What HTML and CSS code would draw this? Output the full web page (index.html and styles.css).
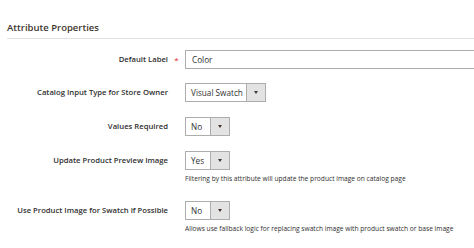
FILE: index.html
```html
<!DOCTYPE html>
<html>
<head>
<meta charset="utf-8">
<link rel="stylesheet" href="styles.css">
</head>
<body>
<div class="page">
  <div class="title">Attribute Properties</div>
  <div class="divider"></div>

  <div class="row r1">
    <div class="label">Default Label</div>
    <div class="req">*</div>
    <div class="control"><div class="input">Color</div></div>
  </div>

  <div class="row r2">
    <div class="label">Catalog Input Type for Store Owner</div>
    <div class="req"></div>
    <div class="control"><div class="select wide"><span class="val">Visual Swatch</span><span class="arrow"><i></i></span></div></div>
  </div>

  <div class="row r3">
    <div class="label">Values Required</div>
    <div class="req"></div>
    <div class="control"><div class="select"><span class="val">No</span><span class="arrow"><i></i></span></div></div>
  </div>

  <div class="row r4">
    <div class="label">Update Product Preview Image</div>
    <div class="req"></div>
    <div class="control">
      <div class="select"><span class="val">Yes</span><span class="arrow"><i></i></span></div>
      <div class="note">Filtering by this attribute will update the product image on catalog page</div>
    </div>
  </div>

  <div class="row r5">
    <div class="label">Use Product Image for Swatch if Possible</div>
    <div class="req"></div>
    <div class="control">
      <div class="select"><span class="val">No</span><span class="arrow"><i></i></span></div>
      <div class="note">Allows use fallback logic for replacing swatch image with product swatch or base image</div>
    </div>
  </div>
</div>
</body>
</html>
```

FILE: styles.css
```css
html, body {
  margin: 0;
  padding: 0;
  background: #ffffff;
}
body {
  font-family: "Open Sans", "Liberation Sans", sans-serif;
  color: #303030;
  width: 474px;
  height: 248px;
  overflow: hidden;
}
.page {
  padding: 19px 0 0 7px;
}
.title {
  font-size: 9.5px;
  font-weight: 600;
  color: #41362f;
  line-height: 18px;
}
.divider {
  height: 1px;
  background: #e3e3e3;
  margin-top: 1px;
}
.row {
  display: flex;
  align-items: flex-start;
}
.r1 { margin-top: 11px; }
.r2 { margin-top: 14px; }
.r3 { margin-top: 15px; }
.r4 { margin-top: 15px; }
.r5 { margin-top: 17px; }
.label {
  flex: 0 0 161px;
  width: 161px;
  text-align: right;
  font-size: 7.7px;
  font-weight: 600;
  color: #303030;
  line-height: 19px;
  white-space: nowrap;
}
.req {
  flex: 0 0 17px;
  width: 17px;
  text-align: center;
  color: #e22626;
  font-size: 8px;
  line-height: 19px;
}
.control {
  flex: 0 0 auto;
  display: flex;
  flex-direction: column;
}
.input {
  box-sizing: border-box;
  width: 300px;
  height: 19px;
  border: 1px solid #adadad;
  font-size: 8.2px;
  line-height: 17px;
  padding-left: 6px;
  color: #303030;
}
.select {
  box-sizing: border-box;
  display: flex;
  width: 45px;
  height: 19px;
  border: 1px solid #adadad;
}
.select.wide { width: 81px; }
.val {
  flex: 1;
  font-size: 8.2px;
  line-height: 17px;
  padding-left: 5px;
  color: #303030;
}
.arrow {
  width: 18px;
  background: #e3e3e3;
  border-left: 1px solid #adadad;
  display: flex;
  align-items: center;
  justify-content: center;
}
.arrow i {
  width: 0;
  height: 0;
  border-left: 2.5px solid transparent;
  border-right: 2.5px solid transparent;
  border-top: 3px solid #41362f;
}
.note {
  font-size: 6.65px;
  line-height: 10px;
  margin-top: 4px;
  color: #303030;
  white-space: nowrap;
}
```
